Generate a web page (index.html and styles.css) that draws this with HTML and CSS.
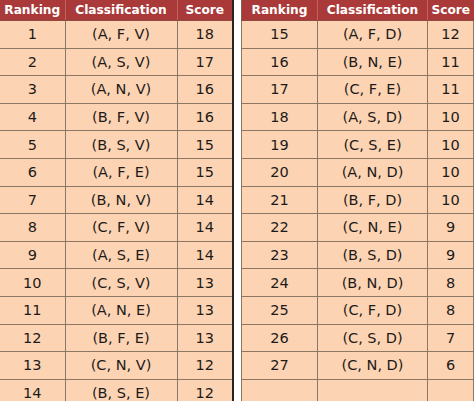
FILE: index.html
```html
<!DOCTYPE html>
<html>
<head>
<meta charset="utf-8">
<link rel="stylesheet" href="styles.css">
</head>
<body>
<div class="wrap">
  <table class="tbl left">
    <colgroup><col class="c1"><col class="c2"><col class="c3"></colgroup>
    <thead><tr><th>Ranking</th><th>Classification</th><th>Score</th></tr></thead>
    <tbody>
      <tr><td>1</td><td>(A, F, V)</td><td>18</td></tr>
      <tr><td>2</td><td>(A, S, V)</td><td>17</td></tr>
      <tr><td>3</td><td>(A, N, V)</td><td>16</td></tr>
      <tr><td>4</td><td>(B, F, V)</td><td>16</td></tr>
      <tr><td>5</td><td>(B, S, V)</td><td>15</td></tr>
      <tr><td>6</td><td>(A, F, E)</td><td>15</td></tr>
      <tr><td>7</td><td>(B, N, V)</td><td>14</td></tr>
      <tr><td>8</td><td>(C, F, V)</td><td>14</td></tr>
      <tr><td>9</td><td>(A, S, E)</td><td>14</td></tr>
      <tr><td>10</td><td>(C, S, V)</td><td>13</td></tr>
      <tr><td>11</td><td>(A, N, E)</td><td>13</td></tr>
      <tr><td>12</td><td>(B, F, E)</td><td>13</td></tr>
      <tr><td>13</td><td>(C, N, V)</td><td>12</td></tr>
      <tr><td>14</td><td>(B, S, E)</td><td>12</td></tr>
    </tbody>
  </table>
  <table class="tbl right">
    <colgroup><col class="d1"><col class="d2"><col class="d3"></colgroup>
    <thead><tr><th>Ranking</th><th>Classification</th><th>Score</th></tr></thead>
    <tbody>
      <tr><td>15</td><td>(A, F, D)</td><td>12</td></tr>
      <tr><td>16</td><td>(B, N, E)</td><td>11</td></tr>
      <tr><td>17</td><td>(C, F, E)</td><td>11</td></tr>
      <tr><td>18</td><td>(A, S, D)</td><td>10</td></tr>
      <tr><td>19</td><td>(C, S, E)</td><td>10</td></tr>
      <tr><td>20</td><td>(A, N, D)</td><td>10</td></tr>
      <tr><td>21</td><td>(B, F, D)</td><td>10</td></tr>
      <tr><td>22</td><td>(C, N, E)</td><td>9</td></tr>
      <tr><td>23</td><td>(B, S, D)</td><td>9</td></tr>
      <tr><td>24</td><td>(B, N, D)</td><td>8</td></tr>
      <tr><td>25</td><td>(C, F, D)</td><td>8</td></tr>
      <tr><td>26</td><td>(C, S, D)</td><td>7</td></tr>
      <tr><td>27</td><td>(C, N, D)</td><td>6</td></tr>
      <tr><td></td><td></td><td></td></tr>
    </tbody>
  </table>
</div>
</body>
</html>
```
FILE: styles.css
```css
html, body {
  margin: 0;
  padding: 0;
  background: #ffffff;
  overflow: hidden;
}
.wrap {
  display: flex;
  align-items: flex-start;
  width: 474px;
  height: 401px;
  overflow: hidden;
}
.tbl {
  border-collapse: collapse;
  table-layout: fixed;
  font-family: "DejaVu Sans", Verdana, sans-serif;
  flex: none;
}
.left {
  width: 233px;
  border-right: 2px solid #2a2222;
}
.right {
  width: 232px;
  margin-left: 7px;
  border-left: 1px solid #7a6655;
}
.c1 { width: 65px; }
.c2 { width: 112px; }
.c3 { width: 56px; }
.d1 { width: 76px; }
.d2 { width: 110px; }
.d3 { width: 46px; }
.tbl th {
  height: 20px;
  padding: 0;
  background: #aa3a3a;
  color: #ffffff;
  font-weight: bold;
  font-size: 12.2px;
  text-align: center;
  border-left: 1px solid #c2625e;
  border-bottom: 1px solid #8f4a40;
  white-space: nowrap;
  overflow: visible;
}
.tbl th:first-child { border-left: none; }
.tbl td {
  height: 26.6px;
  padding: 0;
  background: #fcd4b4;
  color: #1e1a18;
  font-size: 14.5px;
  text-align: center;
  border: 1px solid #8c7664;
  white-space: nowrap;
}
.left td:first-child { border-left: none; }
.left td:last-child { border-right: 2px solid #2a2222; }
```
